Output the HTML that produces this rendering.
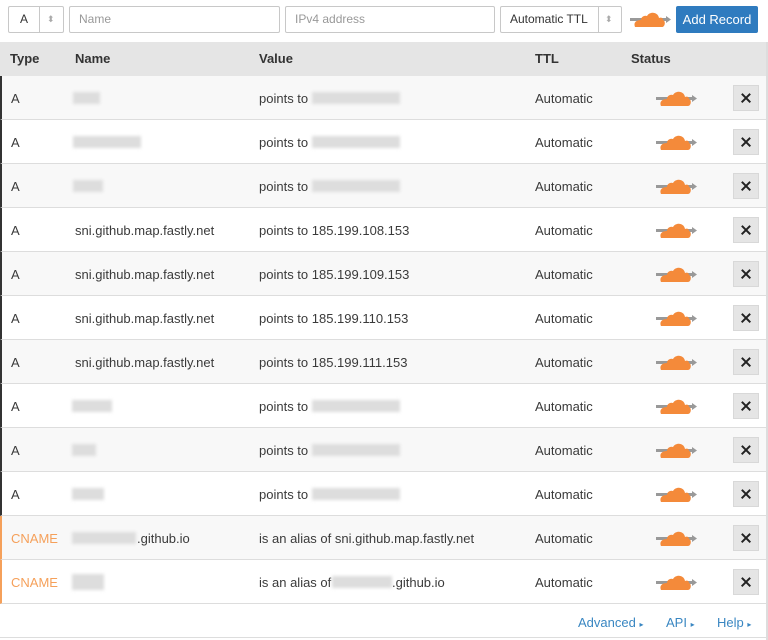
<!DOCTYPE html>
<html><head><meta charset="utf-8"><style>
*{box-sizing:border-box;margin:0;padding:0}
body{width:768px;height:640px;background:#fff;font-family:"Liberation Sans",sans-serif;font-size:13px;color:#3a3a3a;position:relative;overflow:hidden}
.abs{position:absolute}
.inp{position:absolute;top:6px;height:27px;border:1px solid #c8c8c8;border-radius:2px;background:#fff;color:#999;font-size:12px;line-height:25px;padding-left:9px}
.hdr{position:absolute;left:0;top:42px;width:768px;height:34px;background:#e5e5e5;font-weight:bold;font-size:13px;color:#333}
.hdr span{position:absolute;top:9px}
.row{position:absolute;left:0;width:766px;height:44px;border-bottom:1px solid #ddd;border-left:2px solid #333}
.row.e{background:#f8f8f8}
.row.c{border-left-color:#f5a05a}
.row span{position:absolute;top:15px;white-space:nowrap}
.blob{position:absolute;height:12px;top:16px;background:#ddd;filter:blur(1.5px)}
.x{position:absolute;left:731px;top:9px;width:26px;height:26px;background:#e5e5e5;border:1px solid #d8d8d8}
.x::before,.x::after{content:"";position:absolute;left:6px;top:11px;width:12px;height:2.2px;background:#222;transform:rotate(45deg)}
.x::after{transform:rotate(-45deg)}
.cl{position:absolute;left:652px;top:11px}
.lk{position:absolute;top:615px;color:#3a87c2;font-size:13px}
</style></head><body>
<div class="inp" style="left:8px;width:56px;color:#333;padding-left:11px">A<div class="abs" style="left:30px;top:0;width:1px;height:25px;background:#c8c8c8"></div><div class="abs" style="left:38px;top:0;color:#aaa;font-size:9px">⬍</div></div>
<div class="inp" style="left:69px;width:211px">Name</div>
<div class="inp" style="left:285px;width:210px">IPv4 address</div>
<div class="inp" style="left:500px;width:122px;color:#333">Automatic TTL<div class="abs" style="left:97px;top:0;width:1px;height:25px;background:#c8c8c8"></div><div class="abs" style="left:104px;top:0;color:#aaa;font-size:9px">⬍</div></div>
<svg class="abs" style="left:628px;top:8px" width="46" height="22" viewBox="0 0 46 22"><rect x="2" y="10" width="38" height="3" fill="#999"/><path d="M38 8l5 3.5-5 3.5z" fill="#999"/><path d="M7 19h27c3 0 4-6 1-7c0-2-2-3-4-2c-1-6-9-7-12-2c-3-1-6 1-6 4c-4 0-8 2-6 7z" fill="#f48a3a"/></svg>
<div class="abs" style="left:676px;top:6px;width:82px;height:27px;background:#2f7bbf;color:#fff;border-radius:2px;font-size:13px;line-height:27px;text-align:center">Add Record</div>
<div class="hdr"><span style="left:10px">Type</span><span style="left:75px">Name</span><span style="left:259px">Value</span><span style="left:535px">TTL</span><span style="left:631px">Status</span></div>

<div class="row e" style="top:76px"><span style="left:9px">A</span><div class="blob" style="left:71px;width:27px"></div><span style="left:257px">points to</span><div class="blob" style="left:310px;width:88px"></div><span style="left:533px">Automatic</span><svg class="cl" width="46" height="22" viewBox="0 0 46 22"><rect x="2" y="10" width="38" height="3" fill="#999"/><path d="M38 8l5 3.5-5 3.5z" fill="#999"/><path d="M7 19h27c3 0 4-6 1-7c0-2-2-3-4-2c-1-6-9-7-12-2c-3-1-6 1-6 4c-4 0-8 2-6 7z" fill="#f48a3a"/></svg><div class="x"></div></div>
<div class="row" style="top:120px"><span style="left:9px">A</span><div class="blob" style="left:71px;width:68px"></div><span style="left:257px">points to</span><div class="blob" style="left:310px;width:88px"></div><span style="left:533px">Automatic</span><svg class="cl" width="46" height="22" viewBox="0 0 46 22"><rect x="2" y="10" width="38" height="3" fill="#999"/><path d="M38 8l5 3.5-5 3.5z" fill="#999"/><path d="M7 19h27c3 0 4-6 1-7c0-2-2-3-4-2c-1-6-9-7-12-2c-3-1-6 1-6 4c-4 0-8 2-6 7z" fill="#f48a3a"/></svg><div class="x"></div></div>
<div class="row e" style="top:164px"><span style="left:9px">A</span><div class="blob" style="left:71px;width:30px"></div><span style="left:257px">points to</span><div class="blob" style="left:310px;width:88px"></div><span style="left:533px">Automatic</span><svg class="cl" width="46" height="22" viewBox="0 0 46 22"><rect x="2" y="10" width="38" height="3" fill="#999"/><path d="M38 8l5 3.5-5 3.5z" fill="#999"/><path d="M7 19h27c3 0 4-6 1-7c0-2-2-3-4-2c-1-6-9-7-12-2c-3-1-6 1-6 4c-4 0-8 2-6 7z" fill="#f48a3a"/></svg><div class="x"></div></div>
<div class="row" style="top:208px"><span style="left:9px">A</span><span style="left:73px">sni.github.map.fastly.net</span><span style="left:257px">points to 185.199.108.153</span><span style="left:533px">Automatic</span><svg class="cl" width="46" height="22" viewBox="0 0 46 22"><rect x="2" y="10" width="38" height="3" fill="#999"/><path d="M38 8l5 3.5-5 3.5z" fill="#999"/><path d="M7 19h27c3 0 4-6 1-7c0-2-2-3-4-2c-1-6-9-7-12-2c-3-1-6 1-6 4c-4 0-8 2-6 7z" fill="#f48a3a"/></svg><div class="x"></div></div>
<div class="row e" style="top:252px"><span style="left:9px">A</span><span style="left:73px">sni.github.map.fastly.net</span><span style="left:257px">points to 185.199.109.153</span><span style="left:533px">Automatic</span><svg class="cl" width="46" height="22" viewBox="0 0 46 22"><rect x="2" y="10" width="38" height="3" fill="#999"/><path d="M38 8l5 3.5-5 3.5z" fill="#999"/><path d="M7 19h27c3 0 4-6 1-7c0-2-2-3-4-2c-1-6-9-7-12-2c-3-1-6 1-6 4c-4 0-8 2-6 7z" fill="#f48a3a"/></svg><div class="x"></div></div>
<div class="row" style="top:296px"><span style="left:9px">A</span><span style="left:73px">sni.github.map.fastly.net</span><span style="left:257px">points to 185.199.110.153</span><span style="left:533px">Automatic</span><svg class="cl" width="46" height="22" viewBox="0 0 46 22"><rect x="2" y="10" width="38" height="3" fill="#999"/><path d="M38 8l5 3.5-5 3.5z" fill="#999"/><path d="M7 19h27c3 0 4-6 1-7c0-2-2-3-4-2c-1-6-9-7-12-2c-3-1-6 1-6 4c-4 0-8 2-6 7z" fill="#f48a3a"/></svg><div class="x"></div></div>
<div class="row e" style="top:340px"><span style="left:9px">A</span><span style="left:73px">sni.github.map.fastly.net</span><span style="left:257px">points to 185.199.111.153</span><span style="left:533px">Automatic</span><svg class="cl" width="46" height="22" viewBox="0 0 46 22"><rect x="2" y="10" width="38" height="3" fill="#999"/><path d="M38 8l5 3.5-5 3.5z" fill="#999"/><path d="M7 19h27c3 0 4-6 1-7c0-2-2-3-4-2c-1-6-9-7-12-2c-3-1-6 1-6 4c-4 0-8 2-6 7z" fill="#f48a3a"/></svg><div class="x"></div></div>
<div class="row" style="top:384px"><span style="left:9px">A</span><div class="blob" style="left:70px;width:40px"></div><span style="left:257px">points to</span><div class="blob" style="left:310px;width:88px"></div><span style="left:533px">Automatic</span><svg class="cl" width="46" height="22" viewBox="0 0 46 22"><rect x="2" y="10" width="38" height="3" fill="#999"/><path d="M38 8l5 3.5-5 3.5z" fill="#999"/><path d="M7 19h27c3 0 4-6 1-7c0-2-2-3-4-2c-1-6-9-7-12-2c-3-1-6 1-6 4c-4 0-8 2-6 7z" fill="#f48a3a"/></svg><div class="x"></div></div>
<div class="row e" style="top:428px"><span style="left:9px">A</span><div class="blob" style="left:70px;width:24px"></div><span style="left:257px">points to</span><div class="blob" style="left:310px;width:88px"></div><span style="left:533px">Automatic</span><svg class="cl" width="46" height="22" viewBox="0 0 46 22"><rect x="2" y="10" width="38" height="3" fill="#999"/><path d="M38 8l5 3.5-5 3.5z" fill="#999"/><path d="M7 19h27c3 0 4-6 1-7c0-2-2-3-4-2c-1-6-9-7-12-2c-3-1-6 1-6 4c-4 0-8 2-6 7z" fill="#f48a3a"/></svg><div class="x"></div></div>
<div class="row" style="top:472px"><span style="left:9px">A</span><div class="blob" style="left:70px;width:32px"></div><span style="left:257px">points to</span><div class="blob" style="left:310px;width:88px"></div><span style="left:533px">Automatic</span><svg class="cl" width="46" height="22" viewBox="0 0 46 22"><rect x="2" y="10" width="38" height="3" fill="#999"/><path d="M38 8l5 3.5-5 3.5z" fill="#999"/><path d="M7 19h27c3 0 4-6 1-7c0-2-2-3-4-2c-1-6-9-7-12-2c-3-1-6 1-6 4c-4 0-8 2-6 7z" fill="#f48a3a"/></svg><div class="x"></div></div>
<div class="row e c" style="top:516px"><span style="left:9px;color:#f5a05a">CNAME</span><div class="blob" style="left:70px;width:64px"></div><span style="left:135px">.github.io</span><span style="left:257px">is an alias of sni.github.map.fastly.net</span><span style="left:533px">Automatic</span><svg class="cl" width="46" height="22" viewBox="0 0 46 22"><rect x="2" y="10" width="38" height="3" fill="#999"/><path d="M38 8l5 3.5-5 3.5z" fill="#999"/><path d="M7 19h27c3 0 4-6 1-7c0-2-2-3-4-2c-1-6-9-7-12-2c-3-1-6 1-6 4c-4 0-8 2-6 7z" fill="#f48a3a"/></svg><div class="x"></div></div>
<div class="row c" style="top:560px"><span style="left:9px;color:#f5a05a">CNAME</span><div class="blob" style="left:70px;width:32px;height:16px;top:14px"></div><span style="left:257px">is an alias of</span><div class="blob" style="left:330px;width:60px"></div><span style="left:390px">.github.io</span><span style="left:533px">Automatic</span><svg class="cl" width="46" height="22" viewBox="0 0 46 22"><rect x="2" y="10" width="38" height="3" fill="#999"/><path d="M38 8l5 3.5-5 3.5z" fill="#999"/><path d="M7 19h27c3 0 4-6 1-7c0-2-2-3-4-2c-1-6-9-7-12-2c-3-1-6 1-6 4c-4 0-8 2-6 7z" fill="#f48a3a"/></svg><div class="x"></div></div>
<div class="abs" style="left:766px;top:42px;width:2px;height:598px;background:#ddd"></div>
<div class="abs" style="left:0;top:637px;width:768px;height:1px;background:#ddd"></div>
<span class="lk" style="left:578px">Advanced <small style="font-size:8px">▸</small></span>
<span class="lk" style="left:666px">API <small style="font-size:8px">▸</small></span>
<span class="lk" style="left:717px">Help <small style="font-size:8px">▸</small></span>
</body></html>
